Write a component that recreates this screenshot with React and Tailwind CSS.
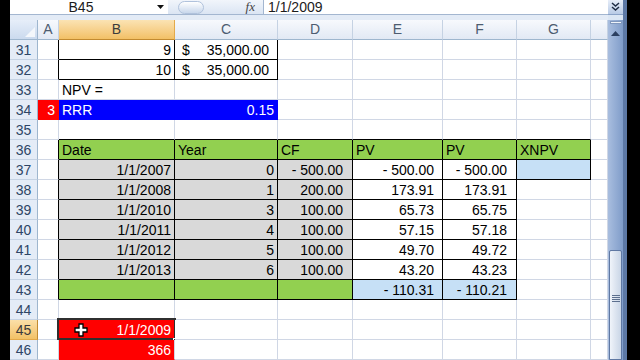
import React from "react";

const GR = "border-r-[#d0d7e5]";
const GB = "border-b-[#d0d7e5]";
const KR = "border-r-black";
const KB = "border-b-black";

const GREEN = "bg-[#92d050]";
const GRAY = "bg-[#d9d9d9]";
const LBLUE = "bg-[#c6e0f6]";

const box = (o) => ({ r: KR, b: KB, ...o });

const emptyRow = () => [{}, {}, {}, {}, {}, {}, {}, {}];

const tableRow = (date, year, cf, pv1, pv2, first) => [
    { r: KR },
    box({ t: date, bg: GRAY }),
    box({ t: year, bg: GRAY }),
    box({ t: cf, bg: GRAY, p: "pr-[9px]" }),
    box({ t: pv1, p: "pr-[8px]" }),
    box({ t: pv2, p: "pr-[9px]" }),
    first ? box({ bg: LBLUE }) : {},
    {},
];

const rows = [
    { n: 31, cells: [{ r: KR }, box({ t: "9" }), box({ l: "$", t: "35,000.00", p: "pl-[7px] pr-[8px]" }), {}, {}, {}, {}, {}] },
    { n: 32, cells: [{ r: KR }, box({ t: "10" }), box({ l: "$", t: "35,000.00", p: "pl-[7px] pr-[8px]" }), {}, {}, {}, {}, {}] },
    { n: 33, cells: [{}, { t: "NPV =", al: "l" }, {}, {}, {}, {}, {}, {}] },
    {
        n: 34,
        cells: [
            { t: "3", bg: "bg-[#ff0000]", tc: "text-white", r: "border-r-[#ff0000]", b: "border-b-[#ff0000]" },
            { t: "RRR", al: "l", bg: "bg-[#0000ff]", tc: "text-white", r: "border-r-[#0000ff]", b: "border-b-[#0000ff]" },
            { t: "0.15", bg: "bg-[#0000ff]", tc: "text-white", r: "border-r-[#0000ff]", b: "border-b-[#0000ff]" },
            {}, {}, {}, {}, {},
        ],
    },
    { n: 35, cells: [{}, { b: KB }, { b: KB }, { b: KB }, { b: KB }, { b: KB }, { b: KB }, {}] },
    {
        n: 36,
        cells: [
            { r: KR },
            box({ t: "Date", al: "l", bg: GREEN }),
            box({ t: "Year", al: "l", bg: GREEN }),
            box({ t: "CF", al: "l", bg: GREEN }),
            box({ t: "PV", al: "l", bg: GREEN }),
            box({ t: "PV", al: "l", bg: GREEN }),
            box({ t: "XNPV", al: "l", bg: GREEN }),
            {},
        ],
    },
    { n: 37, cells: tableRow("1/1/2007", "0", "- 500.00", "- 500.00", "- 500.00", true) },
    { n: 38, cells: tableRow("1/1/2008", "1", "200.00", "173.91", "173.91") },
    { n: 39, cells: tableRow("1/1/2010", "3", "100.00", "65.73", "65.75") },
    { n: 40, cells: tableRow("1/1/2011", "4", "100.00", "57.15", "57.18") },
    { n: 41, cells: tableRow("1/1/2012", "5", "100.00", "49.70", "49.72") },
    { n: 42, cells: tableRow("1/1/2013", "6", "100.00", "43.20", "43.23") },
    {
        n: 43,
        cells: [
            { r: KR },
            box({ bg: GREEN }),
            box({ bg: GREEN }),
            box({ bg: GREEN }),
            box({ t: "- 110.31", bg: LBLUE, p: "pr-[8px]" }),
            box({ t: "- 110.21", bg: LBLUE, p: "pr-[9px]" }),
            {},
            {},
        ],
    },
    { n: 44, cells: emptyRow() },
    {
        n: 45,
        sel: true,
        cells: [
            {},
            { t: "1/1/2009", bg: "bg-[#ff0000]", tc: "text-white", sel: true, b: "border-b-[#ff0000]" },
            {}, {}, {}, {}, {}, {},
        ],
    },
    {
        n: 46,
        cells: [
            {},
            { t: "366", bg: "bg-[#ff0000]", tc: "text-white", b: "border-b-[#ff0000]" },
            {}, {}, {}, {}, {}, {},
        ],
    },
];

const Cell = ({ c }) => {
    return (
        <div
            className={`relative h-[20px] border-r border-b ${c.r || GR} ${c.b || GB} ${c.bg || "bg-white"} ${c.tc || "text-black"} ${c.p || "px-[3px]"} flex items-center ${c.al === "l" ? "justify-start" : "justify-between"} leading-[19px] pt-px whitespace-nowrap`}
        >
            {c.l && <span>{c.l}</span>}
            {!c.l && c.al !== "l" && <span />}
            {c.t && <span>{c.t}</span>}
            {c.sel && (
                <>
                    <div className="absolute left-[-2px] top-[-2px] w-[119px] h-[22px] border-2 border-[#2f2f2f]" />
                    <div className="absolute right-[-4px] bottom-[-4px] w-[5px] h-[5px] bg-[#2f2f2f] border border-white" />
                    <svg className="absolute left-[15px] top-[3px]" width="14" height="14" viewBox="0 0 14 14">
                        <path d="M5 1h4v4h4v4H9v4H5V9H1V5h4z" fill="#fff" stroke="#000" strokeWidth="1.3" />
                    </svg>
                </>
            )}
        </div>
    );
};

const ScrollBar = () => (
    <div className="w-[19px] h-[360px] flex flex-col bg-gradient-to-r from-[#a9bedf] to-[#7f9cc9] border-r-[4px] border-r-[#5d79a6]">
        <div className="h-[15px] flex items-center justify-center bg-gradient-to-b from-[#e7eef9] to-[#b9cbe6] border-b border-[#8ba3c8]">
            <svg width="9" height="10" viewBox="0 0 9 10">
                <path d="M1 1l3.5 3L8 1M1 5l3.5 3L8 5" fill="none" stroke="#1e2c44" strokeWidth="1.5" />
            </svg>
        </div>
        <div className="h-[5px] bg-[#dbe6f4]" />
        <div className="h-[20px] flex flex-col items-center">
            <div className="mt-[1px] w-[12px] h-[3px] bg-[#eef3fa] border border-[#7f97bd]" />
            <svg className="mt-[7px]" width="9" height="5" viewBox="0 0 9 5">
                <path d="M0 5L4.5 0L9 5z" fill="#2b3f60" />
            </svg>
        </div>
        <div className="h-[210px]" />
        <div className="h-[110px] mx-[1px] rounded-t-[2px] border border-[#5f78a3] bg-gradient-to-r from-[#f0f4fa] to-[#c9d5e6] flex items-center justify-center">
            <div className="flex flex-col gap-[1px] mb-[14px]">
                <div className="w-[8px] h-px bg-[#5c6f8e]" />
                <div className="w-[8px] h-px bg-[#5c6f8e]" />
                <div className="w-[8px] h-px bg-[#5c6f8e]" />
                <div className="w-[8px] h-px bg-[#5c6f8e]" />
            </div>
        </div>
    </div>
);

const FormulaBar = () => (
    <div className="h-[15px] flex bg-white border-b border-[#a3b6d0] text-[14px] leading-[14px] text-[#1c1c1c]">
        <div className="w-[142px] text-center">B45</div>
        <div className="w-[16px] flex items-center justify-center">
            <svg width="7" height="4" viewBox="0 0 7 4">
                <path d="M0 0h7L3.5 4z" fill="#111" />
            </svg>
        </div>
        <div className="w-[95px] flex items-center bg-gradient-to-b from-[#f1f5fb] to-[#dbe5f3]">
            <div className="ml-[10px] w-[26px] h-[13px] rounded-full bg-gradient-to-b from-[#ffffff] to-[#c9d8ec] border border-[#b0c2dc]" />
            <span className="ml-auto mr-[8px] italic text-[13px] text-[#444] font-['Liberation_Serif',serif]">fx</span>
        </div>
        <div className="flex-1 border-l border-[#a3b6d0] pl-[4px]">1/1/2009</div>
    </div>
);

const headers = ["A", "B", "C", "D", "E", "F", "G", ""];

export default function App() {
    return (
        <div className="w-[640px] h-[360px] bg-black flex overflow-hidden font-['Liberation_Sans',Arial,sans-serif] text-[14px]">
            <div className="w-[10px]" />
            <div className="w-[598px] flex flex-col">
                <FormulaBar />
                <div className="h-[5px] bg-[#e3ebf6]" />
                <div className="grid grid-cols-[28px_21px_116px_103px_75px_90px_74px_74px_17px] bg-white">
                    <div className="h-[20px] bg-gradient-to-b from-[#e6eef9] to-[#cbdaee] border-r border-b border-[#9eb6ce] flex items-end justify-end p-[2px]">
                        <svg width="10" height="10" viewBox="0 0 10 10">
                            <path d="M10 0V10H0z" fill="#f4f7fb" />
                        </svg>
                    </div>
                    {headers.map((h, i) => (
                        <div
                            key={i}
                            className={`h-[20px] border-r border-b flex items-center justify-center leading-[19px] ${h === "B" ? "bg-gradient-to-b from-[#fbe3b3] to-[#f2c065] border-r-[#e3a94a] border-b-[#c28a30] text-[#3c3c3c]" : "bg-gradient-to-b from-[#f7f9fd] to-[#e2e9f4] border-r-[#c5d2e3] border-b-[#9eb6ce] text-[#4d5c70]"}`}
                        >
                            {h}
                        </div>
                    ))}
                    {rows.map((row) => (
                        <React.Fragment key={row.n}>
                            <div
                                className={`h-[20px] border-r border-b flex items-center justify-center leading-[19px] pt-px ${row.sel ? "bg-gradient-to-b from-[#fbdfa8] to-[#f2c165] border-r-[#c28a30] border-b-[#e3a94a] text-[#3a3a3a]" : "bg-[#e4ecf7] border-r-[#9eb6ce] border-b-[#c5d3e4] text-[#2e4666]"}`}
                            >
                                {row.n}
                            </div>
                            {row.cells.map((c, i) => (
                                <Cell key={i} c={c} />
                            ))}
                        </React.Fragment>
                    ))}
                </div>
            </div>
            <ScrollBar />
        </div>
    );
}
